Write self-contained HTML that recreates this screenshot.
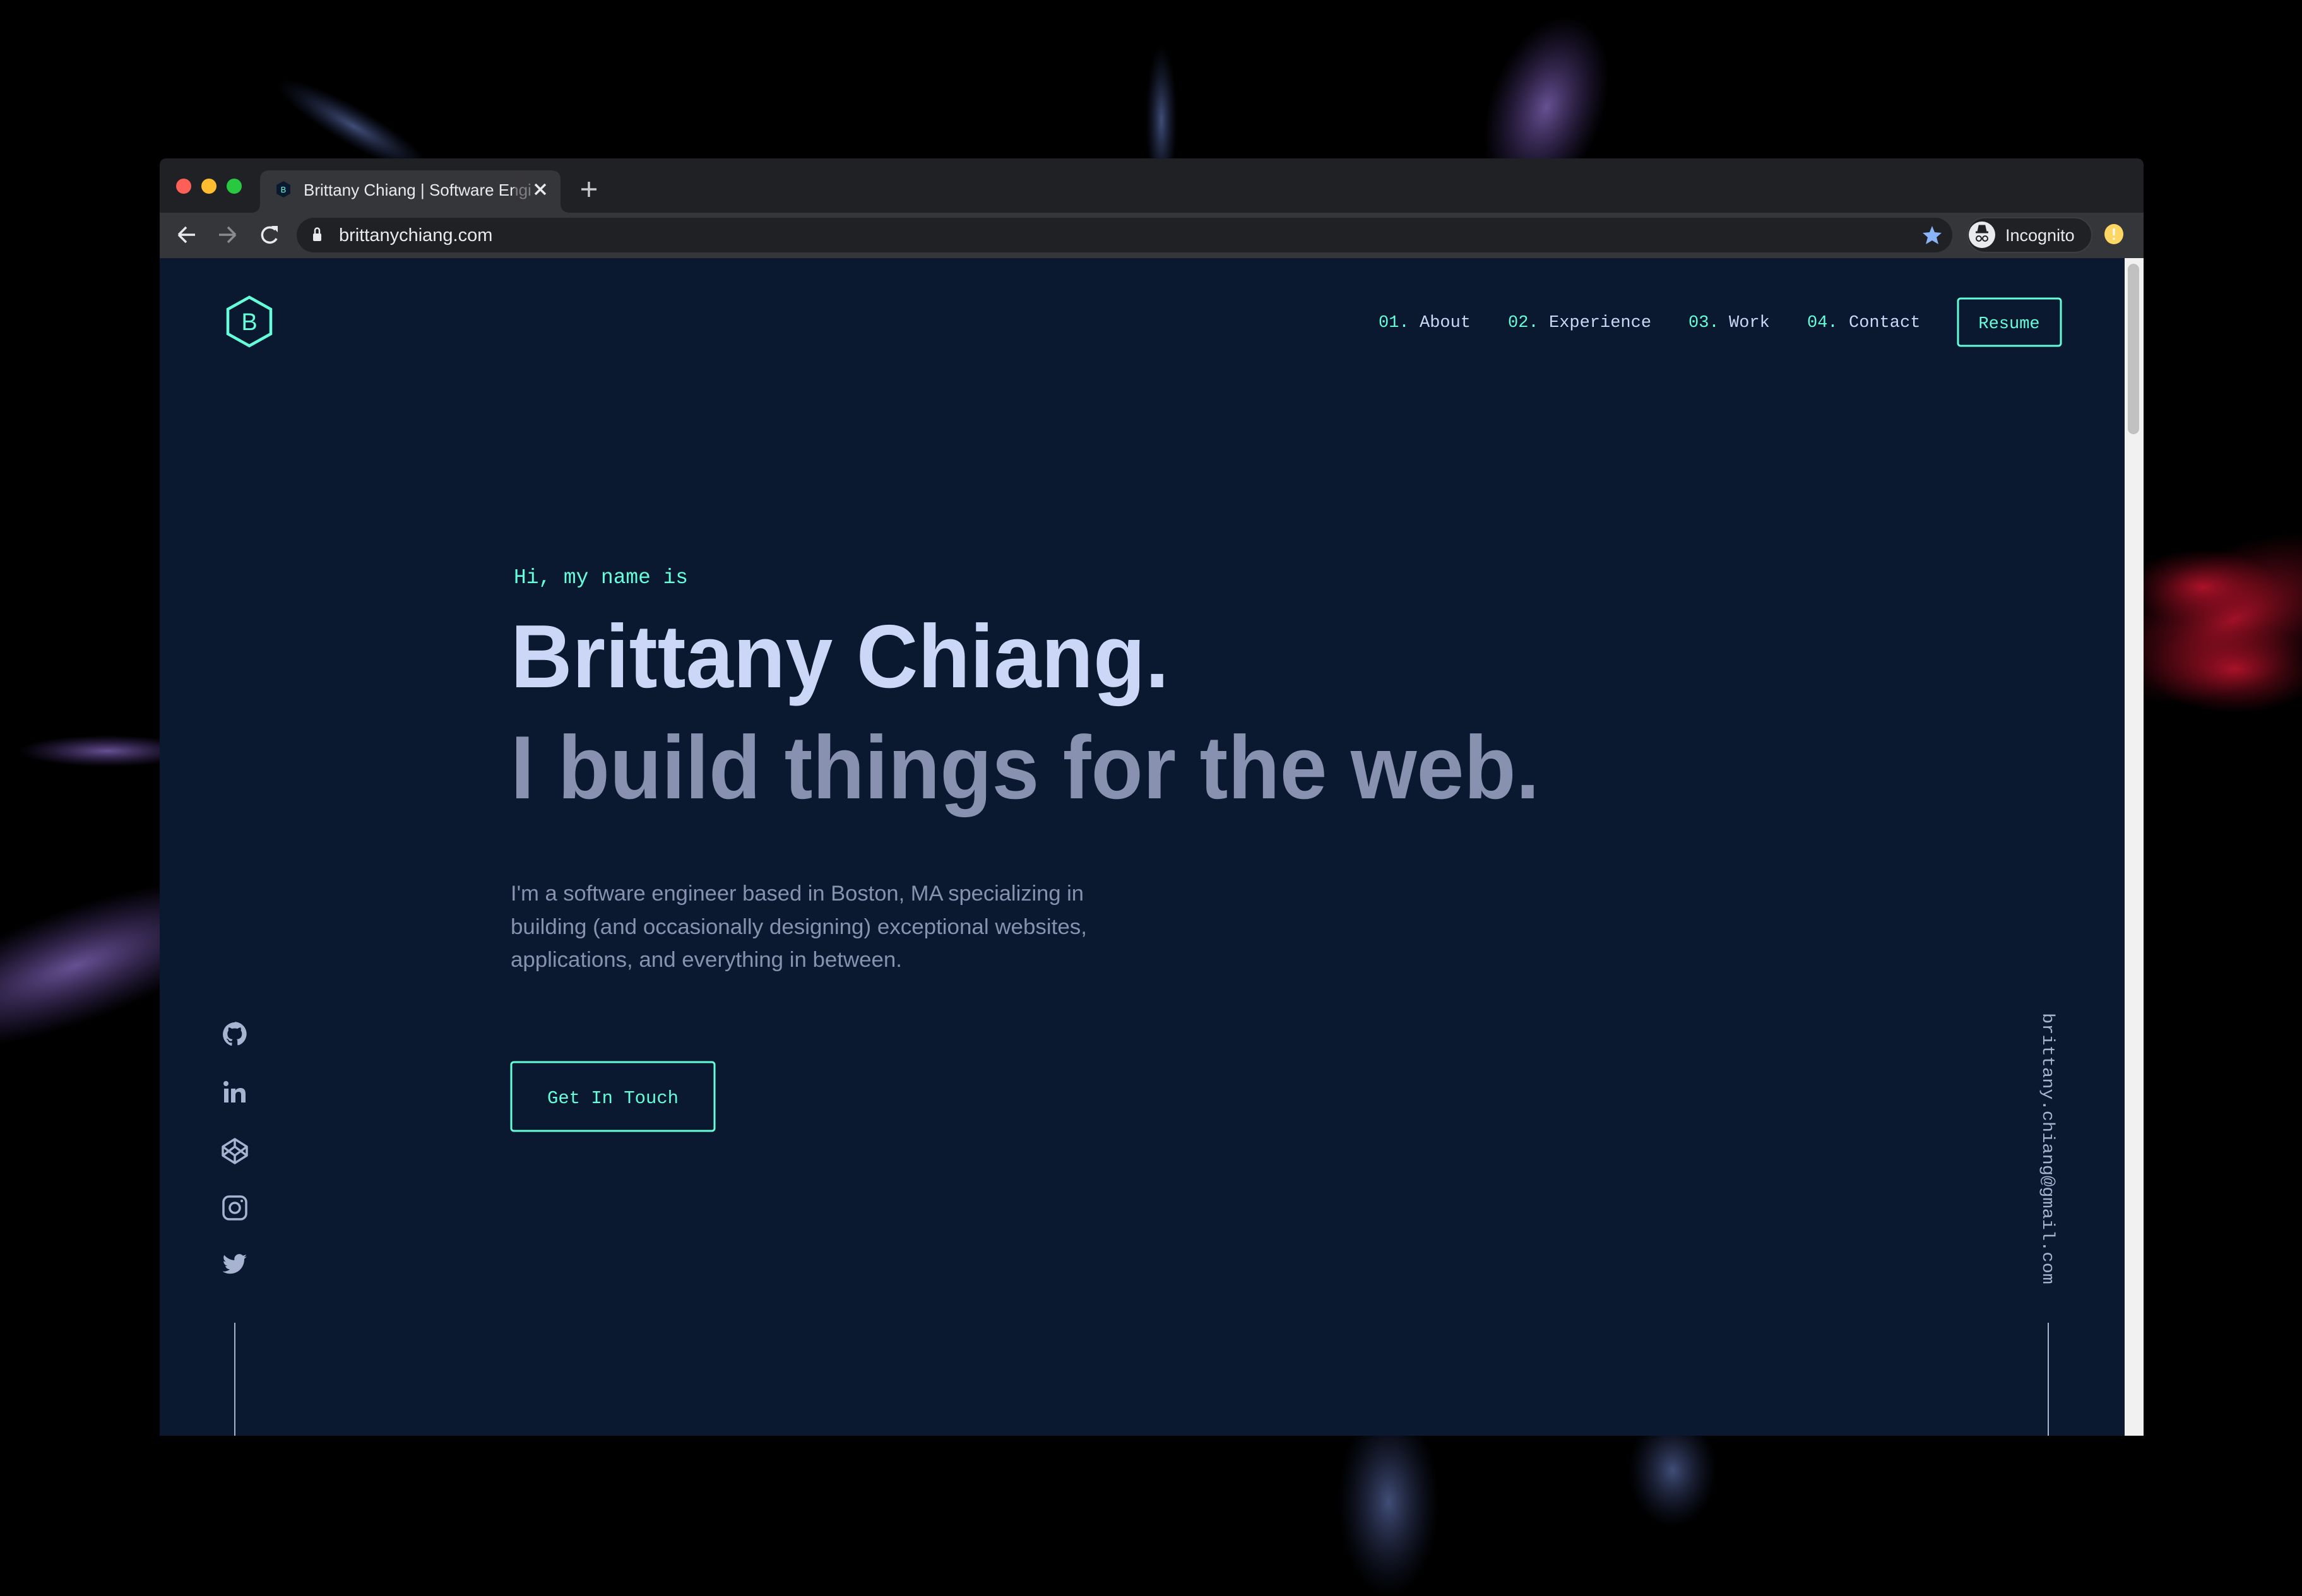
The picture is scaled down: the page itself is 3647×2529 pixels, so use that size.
<!DOCTYPE html>
<html><head><meta charset="utf-8">
<style>
html,body{margin:0;padding:0;background:#000;width:3647px;height:2529px;overflow:hidden}
svg{display:block}
.mono{font-family:"Liberation Mono",monospace}
.sans{font-family:"Liberation Sans",sans-serif}
</style></head>
<body>
<svg width="3647" height="2529" viewBox="0 0 3647 2529" xmlns="http://www.w3.org/2000/svg">
<defs>
<radialGradient id="pu" cx="50%" cy="50%" r="50%"><stop offset="0" stop-color="#8a6cc4" stop-opacity=".75"/><stop offset="1" stop-color="#5a3f9a" stop-opacity="0"/></radialGradient>
<radialGradient id="rd" cx="50%" cy="50%" r="50%"><stop offset="0" stop-color="#c0142e" stop-opacity=".85"/><stop offset="1" stop-color="#7a0a1a" stop-opacity="0"/></radialGradient>
<radialGradient id="bl" cx="50%" cy="50%" r="50%"><stop offset="0" stop-color="#6d82c8" stop-opacity=".6"/><stop offset="1" stop-color="#33407a" stop-opacity="0"/></radialGradient>
</defs>
<rect width="3647" height="2529" fill="#000"/>
<ellipse cx="2450" cy="170" rx="90" ry="150" fill="url(#pu)" transform="rotate(20 2450 170)"/>
<ellipse cx="560" cy="200" rx="140" ry="30" fill="url(#bl)" transform="rotate(30 560 200)"/>
<ellipse cx="1840" cy="190" rx="25" ry="120" fill="url(#bl)"/>
<ellipse cx="120" cy="1530" rx="300" ry="90" fill="url(#pu)" transform="rotate(-20 120 1530)"/>
<ellipse cx="170" cy="1190" rx="140" ry="25" fill="url(#pu)"/>
<ellipse cx="3540" cy="980" rx="220" ry="110" fill="url(#rd)" transform="rotate(-25 3540 980)"/>
<ellipse cx="3490" cy="930" rx="120" ry="60" fill="url(#rd)"/>
<ellipse cx="3540" cy="1060" rx="140" ry="70" fill="url(#rd)"/>
<ellipse cx="2200" cy="2380" rx="80" ry="150" fill="url(#bl)"/>
<ellipse cx="2650" cy="2330" rx="70" ry="90" fill="url(#bl)"/>

<rect x="253" y="251" width="3143" height="2024" rx="10" fill="#202124"/>
<rect x="253" y="337" width="3143" height="72" fill="#35363a"/>
<circle cx="291" cy="295" r="12" fill="#fe5f57"/>
<circle cx="331" cy="295" r="12" fill="#febc2e"/>
<circle cx="371" cy="295" r="12" fill="#28c840"/>
<path d="M398 337 Q412 337 412 322 L412 285 Q412 270 427 270 L873 270 Q888 270 888 285 L888 322 Q888 337 903 337 Z" fill="#35363a"/>
<polygon points="449,287 460,293 460,307 449,313 438,307 438,293" fill="#0a192f"/>
<text x="449" y="305" font-size="13" fill="#64ffda" text-anchor="middle" class="sans">B</text>
<text x="481" y="310" font-size="26" fill="#e8eaed" class="sans">Brittany Chiang | Software Engi</text>
<rect x="815" y="278" width="25" height="44" fill="#35363a" opacity=".6"/>
<path d="M848 292 L864 308 M864 292 L848 308" stroke="#e8eaed" stroke-width="3.5"/>
<path d="M933 288 V312 M921 300 H945" stroke="#c8c9cc" stroke-width="3.5"/>
<path d="M283 372 H309 M283 372 L295 360 M283 372 L295 384" stroke="#e8eaed" stroke-width="3.5" fill="none"/>
<path d="M373 372 H347 M373 372 L361 360 M373 372 L361 384" stroke="#8a8b8e" stroke-width="3.5" fill="none"/>
<path d="M436 364 A12 12 0 1 0 438 378" stroke="#e8eaed" stroke-width="3.5" fill="none"/>
<path d="M430 358 L440 358 L440 368 Z" fill="#e8eaed"/>
<rect x="470" y="345" width="2623" height="55" rx="27.5" fill="#202124"/>
<rect x="496" y="370" width="13" height="12" rx="2" fill="#e8eaed"/>
<path d="M499 371 V365 A3.5 3.5 0 0 1 506 365 V371" stroke="#e8eaed" stroke-width="2.5" fill="none"/>
<text x="537" y="382" font-size="29" fill="#e8eaed" class="sans">brittanychiang.com</text>
<polygon points="3061,358 3065,368 3076,369 3068,376 3071,387 3061,381 3051,387 3054,376 3046,369 3057,368" fill="#8ab4f8"/>
<rect x="3117" y="345" width="197" height="55" rx="27.5" fill="#202124" stroke="#3c3d40" stroke-width="2"/>
<circle cx="3140" cy="372" r="21" fill="#e8eaed"/>
<path d="M3130 368 H3150 M3134 367 L3136 358 H3144 L3146 367" stroke="#202124" stroke-width="3" fill="#202124"/>
<circle cx="3135" cy="378" r="4" stroke="#202124" stroke-width="2" fill="none"/>
<circle cx="3145" cy="378" r="4" stroke="#202124" stroke-width="2" fill="none"/>
<text x="3177" y="382" font-size="27" fill="#e8eaed" class="sans">Incognito</text>
<ellipse cx="3349" cy="371" rx="15" ry="16" fill="#fdd663"/>
<path d="M3349 362 V373 M3349 377 V380" stroke="#fff" stroke-width="3"/>

<rect x="253" y="409" width="3113" height="1866" fill="#0a192f"/>
<rect x="3366" y="409" width="30" height="1866" fill="#f1f1f1"/>
<rect x="3371" y="418" width="18" height="270" rx="9" fill="#c1c1c1"/>

<polygon points="395,471 429,490 429,529 395,548 361,529 361,490" fill="none" stroke="#64ffda" stroke-width="4.5"/>
<text x="395" y="523" font-size="38" fill="#64ffda" text-anchor="middle" class="sans">B</text>

<g class="mono" font-size="27">
<text x="2184" y="518" fill="#64ffda">01.</text><text x="2249" y="518" fill="#ccd6f6">About</text>
<text x="2389" y="518" fill="#64ffda">02.</text><text x="2454" y="518" fill="#ccd6f6">Experience</text>
<text x="2675" y="518" fill="#64ffda">03.</text><text x="2739" y="518" fill="#ccd6f6">Work</text>
<text x="2863" y="518" fill="#64ffda">04.</text><text x="2929" y="518" fill="#ccd6f6">Contact</text>
</g>
<rect x="3102" y="473" width="163" height="75" rx="4" fill="none" stroke="#64ffda" stroke-width="3"/>
<text x="3183" y="520" font-size="27" fill="#64ffda" text-anchor="middle" class="mono">Resume</text>

<text x="814" y="924" font-size="33" fill="#64ffda" class="mono" textLength="276" lengthAdjust="spacingAndGlyphs">Hi, my name is</text>
<text x="809" y="1089" font-size="142" font-weight="bold" fill="#ccd6f6" class="sans" textLength="1043" lengthAdjust="spacingAndGlyphs">Brittany Chiang.</text>
<text x="809" y="1265" font-size="142" font-weight="bold" fill="#8892b0" class="sans" textLength="1630" lengthAdjust="spacingAndGlyphs">I build things for the web.</text>
<g class="sans" font-size="34" fill="#8892b0">
<text x="809" y="1427" textLength="908" lengthAdjust="spacingAndGlyphs">I'm a software engineer based in Boston, MA specializing in</text>
<text x="809" y="1480" textLength="913" lengthAdjust="spacingAndGlyphs">building (and occasionally designing) exceptional websites,</text>
<text x="809" y="1532" textLength="620" lengthAdjust="spacingAndGlyphs">applications, and everything in between.</text>
</g>
<rect x="810" y="1683" width="322" height="109" rx="4" fill="none" stroke="#64ffda" stroke-width="3"/>
<text x="971" y="1748" font-size="29" fill="#64ffda" text-anchor="middle" class="mono" textLength="208" lengthAdjust="spacingAndGlyphs">Get In Touch</text>

<g fill="#a8b2d1" stroke="none">
<path d="M372 1620 a19 19 0 0 0 -6 37 c1 0 1.5-.5 1.5-1 v-4 c-5 1-6-2.5-6-2.5 c-1-2-2-2.5-2-2.5 c-1.5-1 .1-1 .1-1 c1.8.1 2.7 1.8 2.7 1.8 c1.6 2.7 4.2 2 5.2 1.5 c.2-1.2.6-2 1.1-2.4 c-4-.5-8.3-2-8.3-9 c0-2 .7-3.6 1.8-4.9 c-.2-.5-.8-2.3.2-4.8 c0 0 1.5-.5 5 1.9 a17 17 0 0 1 9 0 c3.5-2.4 5-1.9 5-1.9 c1 2.5.4 4.3.2 4.8 c1.2 1.3 1.8 2.9 1.8 4.9 c0 7-4.3 8.5-8.3 9 c.6.6 1.2 1.7 1.2 3.4 v5 c0 .5.4 1.1 1.5 1 a19 19 0 0 0 -6-37z"/>
<circle cx="358" cy="1717" r="4"/>
<rect x="355" y="1725" width="7" height="22"/>
<path d="M366 1725 h7 v3 c2-3 5-4 8-4 c6 0 8 4 8 9 v14 h-7 v-12 c0-3-1-5-4-5 c-3 0-5 2-5 5 v12 h-7z"/>
</g>
<g fill="none" stroke="#a8b2d1" stroke-width="3.5" stroke-linejoin="round">
<path d="M372 1805 L391 1817 V1831 L372 1843 L353 1831 V1817 Z"/>
<path d="M372 1805 V1817 L353 1831 M372 1817 L391 1831 M372 1843 V1831 L353 1817 M372 1831 L391 1817"/>
<rect x="354" y="1896" width="36" height="36" rx="9"/>
<circle cx="372" cy="1914" r="8"/>
</g>
<circle cx="383" cy="1903" r="2" fill="#a8b2d1"/>
<path fill="#a8b2d1" d="M391 1991 c-1.4.6-2.9 1-4.5 1.2 c1.6-1 2.8-2.5 3.4-4.3 c-1.5.9-3.2 1.5-5 1.9 a7.8 7.8 0 0 0-13.4 7.1 c-6.5-.3-12.3-3.4-16.2-8.2 c-2.1 3.6-1 8.2 2.4 10.5 c-1.3 0-2.5-.4-3.6-1 c0 3.8 2.7 7 6.3 7.7 c-1.2.3-2.4.4-3.5.1 c1 3.1 3.900 5.4 7.3 5.4 c-3.3 2.6-7.5 3.8-11.6 3.3 c3.6 2.3 7.8 3.6 12.1 3.6 c14.5 0 22.7-12.3 22.3-23.5 c1.5-1.1 2.9-2.5 4-4z"/>

<rect x="371" y="2096" width="2" height="179" fill="#a8b2d1"/>
<rect x="3244" y="2096" width="2" height="179" fill="#a8b2d1"/>
<text transform="translate(3237 1605) rotate(90)" font-size="27" fill="#a8b2d1" class="mono" textLength="430" lengthAdjust="spacingAndGlyphs">brittany.chiang@gmail.com</text>
</svg>
</body></html>
